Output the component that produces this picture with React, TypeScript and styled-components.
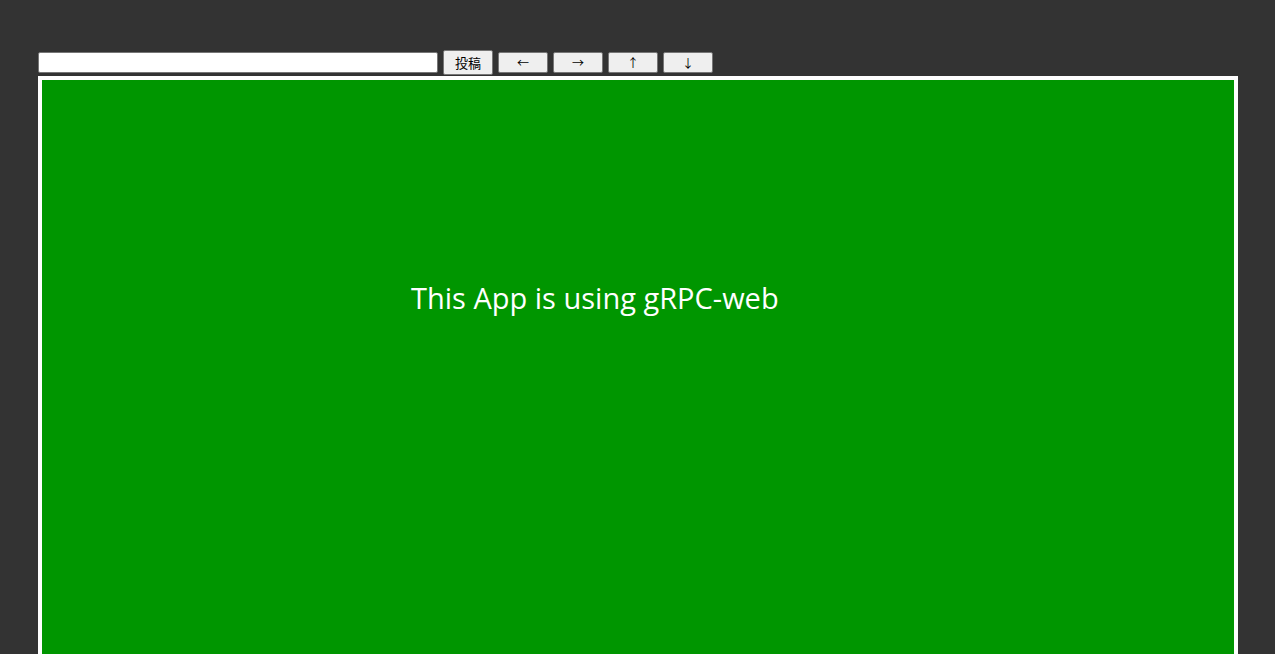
import React, { useState } from "react";
import styled, { createGlobalStyle } from "styled-components";

const GlobalStyle = createGlobalStyle`
  html, body {
    margin: 0;
    padding: 0;
    background: #333333;
    overflow: hidden;
  }
  body {
    font-family: "Liberation Sans", Arial, sans-serif;
  }
`;

const Page = styled.div`
  padding: 50px 37px 0 38px;
  height: 654px;
  box-sizing: border-box;
`;

const Toolbar = styled.div`
  display: flex;
  align-items: flex-start;
  gap: 5px;
  height: 26px;
`;

const MessageInput = styled.input`
  width: 400px;
  height: 21px;
  margin-top: 2px;
  box-sizing: border-box;
  border: 1px solid #767676;
  border-radius: 2px;
  background: #ffffff;
  padding: 1px 2px;
  font-size: 13px;
  outline: none;
`;

const ToolButton = styled.button<{ $tall?: boolean }>`
  width: 50px;
  height: ${(p) => (p.$tall ? "25px" : "21px")};
  margin-top: ${(p) => (p.$tall ? "0" : "2px")};
  box-sizing: border-box;
  border: 1px solid #767676;
  border-radius: 2px;
  background: #efefef;
  color: #000000;
  padding: 0;
  font-family: "Noto Sans CJK JP", "DejaVu Sans", sans-serif;
  font-size: ${(p) => (p.$tall ? "13px" : "12px")};
  font-weight: 400;
  line-height: 1;
  display: flex;
  align-items: center;
  justify-content: center;
  cursor: pointer;
`;

const Board = styled.div`
  position: relative;
  width: 1200px;
  height: 600px;
  box-sizing: border-box;
  border: 4px solid #ffffff;
  background: #009600;
  overflow: hidden;
`;

const BoardText = styled.span<{ $x: number; $y: number }>`
  position: absolute;
  left: ${(p) => p.$x}px;
  top: ${(p) => p.$y}px;
  color: #ffffff;
  font-family: "Open Sans", "Noto Sans", sans-serif;
  font-size: 29px;
  line-height: 1;
  white-space: nowrap;
`;

export default function App() {
  const [text, setText] = useState("");
  const [pos, setPos] = useState({ x: 369, y: 203 });

  const move = (dx: number, dy: number) =>
    setPos((p) => ({ x: p.x + dx, y: p.y + dy }));

  return (
    <>
      <GlobalStyle />
      <Page>
        <Toolbar>
          <MessageInput value={text} onChange={(e) => setText(e.target.value)} />
          <ToolButton $tall onClick={() => setText("")}>
            投稿
          </ToolButton>
          <ToolButton onClick={() => move(-10, 0)}>←</ToolButton>
          <ToolButton onClick={() => move(10, 0)}>→</ToolButton>
          <ToolButton onClick={() => move(0, -10)}>↑</ToolButton>
          <ToolButton onClick={() => move(0, 10)}>↓</ToolButton>
        </Toolbar>
        <Board>
          <BoardText $x={pos.x} $y={pos.y}>
            This App is using gRPC-web
          </BoardText>
        </Board>
      </Page>
    </>
  );
}
